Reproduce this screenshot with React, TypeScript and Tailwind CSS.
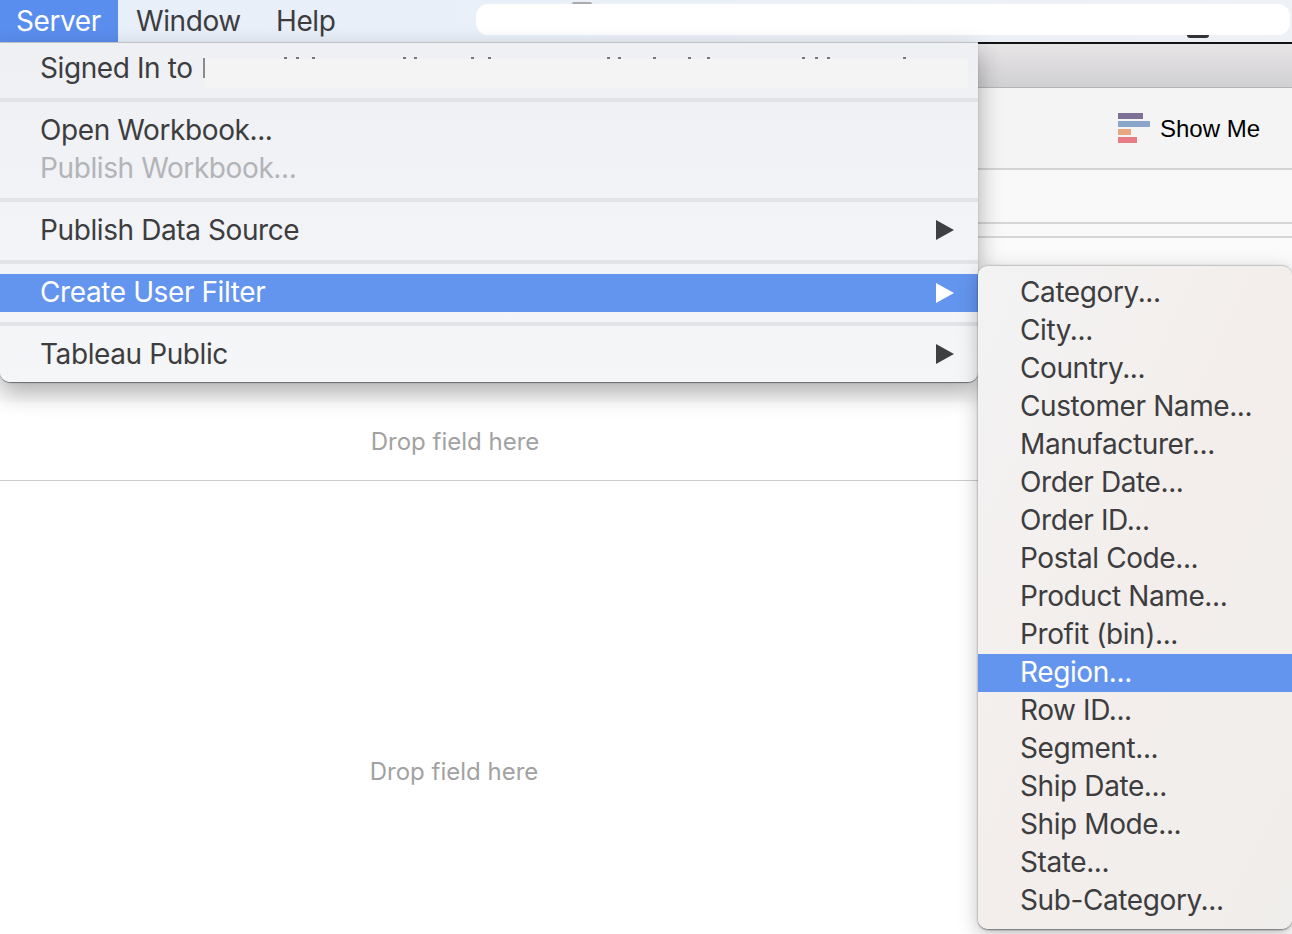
const userFilterFields = [
  "Category...",
  "City...",
  "Country...",
  "Customer Name...",
  "Manufacturer...",
  "Order Date...",
  "Order ID...",
  "Postal Code...",
  "Product Name...",
  "Profit (bin)...",
  "Region...",
  "Row ID...",
  "Segment...",
  "Ship Date...",
  "Ship Mode...",
  "State...",
  "Sub-Category...",
];

// bits of the address that stick out above the white redaction box
const addressTicks = [284, 296, 312, 403, 414, 471, 488, 607, 618, 653, 688, 707, 802, 815, 827, 903];

function Arrow({ white }: { white?: boolean }) {
  return (
    <svg width="18" height="20" viewBox="0 0 18 20" className="shrink-0">
      <polygon points="0,0 18,10 0,20" fill={white ? "#ffffff" : "#3f3f41"} />
    </svg>
  );
}

function MenuRow({
  label,
  arrow,
  active,
  disabled,
}: {
  label: string;
  arrow?: boolean;
  active?: boolean;
  disabled?: boolean;
}) {
  const tone = active ? "bg-[#6495ee] text-white" : disabled ? "text-[#b3b4b8]" : "text-[#3d3d40]";
  return (
    <div className={`flex h-[38px] items-center justify-between pl-[40px] pr-[24px] ${tone}`}>
      <span className={active ? "pb-[2px]" : ""}>{label}</span>
      {arrow && <Arrow white={active} />}
    </div>
  );
}

function Separator({ className }: { className: string }) {
  return (
    <div className={className}>
      <div className="h-[4px] bg-[#e2e3e6]" />
    </div>
  );
}

function ServerMenu() {
  return (
    <div className="absolute left-0 top-[42px] w-[978px] rounded-b-[10px] border-t border-[#bfc1c6] bg-gradient-to-b from-[#eef0f4] to-[#f5f6f8] pb-[9px] pt-[6px] shadow-[0_1px_1px_rgba(0,0,0,0.45),0_10px_24px_rgba(0,0,0,0.32)]">
      <div className="relative">
        <MenuRow label="Signed In to" />
        <div className="absolute left-[203px] top-[9px] h-[20px] w-[2px] bg-[#8b8b8e]" />
        <div className="absolute left-[205px] top-[10px] h-[29px] w-[763px] bg-[#f4f4f5]" />
        {addressTicks.map((x) => (
          <div key={x} className="absolute top-[8px] h-[2px] w-[3px] bg-[#77777a]" style={{ left: x }} />
        ))}
      </div>
      <Separator className="pb-[9px] pt-[11px]" />
      <MenuRow label="Open Workbook..." />
      <MenuRow label="Publish Workbook..." disabled />
      <Separator className="pb-[9px] pt-[11px]" />
      <MenuRow label="Publish Data Source" arrow />
      <Separator className="pb-[10px] pt-[11px]" />
      <MenuRow label="Create User Filter" arrow active />
      <Separator className="pb-[9px] pt-[10px]" />
      <MenuRow label="Tableau Public" arrow />
    </div>
  );
}

function UserFilterMenu() {
  return (
    <div className="absolute left-[978px] top-[265px] w-[314px] rounded-[10px] border-t border-[#c6c6c8] bg-gradient-to-br from-[#f3f3f4] via-[#f3eeeb] to-[#f0eeec] pb-[9px] pt-[8px] shadow-[0_1px_2px_rgba(0,0,0,0.5),0_6px_20px_rgba(0,0,0,0.25)]">
      {userFilterFields.map((field) => (
        <div
          key={field}
          className={`flex h-[38px] items-center pb-[2px] pl-[42px] ${field === "Region..." ? "bg-[#6495ee] text-white" : "text-[#3d3d40]"}`}
        >
          {field}
        </div>
      ))}
    </div>
  );
}

function ShowMeIcon() {
  return (
    <svg width="32" height="30" viewBox="0 0 32 30">
      <rect x="0" y="0" width="25" height="6" fill="#7f7096" />
      <rect x="0" y="8" width="32" height="6" fill="#8ca6ca" />
      <rect x="0" y="16" width="13" height="6" fill="#e8a882" />
      <rect x="0" y="24" width="19" height="6" fill="#e87c85" />
    </svg>
  );
}

export default function App() {
  return (
    <div className="relative h-[934px] w-[1292px] overflow-hidden bg-white [font-family:Inter,sans-serif] text-[28px] tracking-[-0.4px]">
      {/* mac menu bar */}
      <div className="flex h-[42px] items-center bg-gradient-to-r from-[#e7effa] to-[#eef1f6] text-[#3d3d40]">
        <div className="flex h-full w-[118px] items-center bg-[#5a8eee] pl-[16px] text-white">Server</div>
        <div className="ml-[18px] w-[140px]">Window</div>
        <div className="w-[200px]">Help</div>
        <div className="relative mb-[3px] h-[31px] w-[814px] rounded-[12px] bg-white">
          <div className="absolute left-[96px] top-[-2px] h-[2px] w-[20px] rounded-t-full bg-[#a9aaad]" />
          <div className="absolute bottom-[-3px] left-[711px] h-[3px] w-[22px] rounded-b-full bg-[#2f3338]" />
        </div>
      </div>

      {/* tableau window behind the menus */}
      <div className="border-t-2 border-[#111214]">
        <div className="h-[44px] border-b border-[#b4b4b6] bg-gradient-to-b from-[#e8e5e7] to-[#d0cfd1]" />
        <div className="flex h-[82px] items-center justify-end gap-[10px] border-b-2 border-[#d3d3d3] bg-[#f4f4f4] pr-[32px]">
          <ShowMeIcon />
          <span className="pt-[2px] [font-family:'Liberation_Sans',sans-serif] text-[24px] tracking-normal text-black">Show Me</span>
        </div>
        <div className="h-[54px] border-b-2 border-[#d6d6d6] bg-[#f9f9f9]" />
        <div className="h-[14px] border-b-2 border-[#d6d6d6] bg-[#f9f9f9]" />
        <div className="h-[164px] bg-[#fbfbfb]" />
        <div className="border-b border-[#cccccc] pr-[382px]">
          <div className="flex h-[78px] items-center justify-center pt-[2px] text-[24px] tracking-normal text-[#a2a2a2]">Drop field here</div>
        </div>
        <div className="flex h-[580px] items-center justify-center pr-[384px] pt-[2px] text-[24px] tracking-normal text-[#a2a2a2]">
          Drop field here
        </div>
      </div>

      <ServerMenu />
      <UserFilterMenu />
    </div>
  );
}
